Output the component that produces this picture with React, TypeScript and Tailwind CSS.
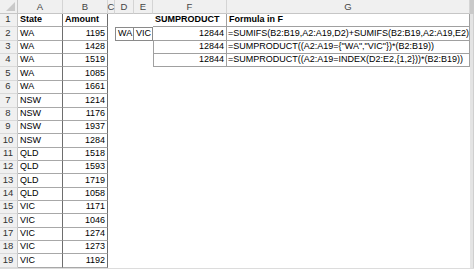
import React from "react";

const data: [string, string][] = [
  ["WA", "1195"], ["WA", "1428"], ["WA", "1519"], ["WA", "1085"], ["WA", "1661"],
  ["NSW", "1214"], ["NSW", "1176"], ["NSW", "1937"], ["NSW", "1284"],
  ["QLD", "1518"], ["QLD", "1593"], ["QLD", "1719"], ["QLD", "1058"],
  ["VIC", "1171"], ["VIC", "1046"], ["VIC", "1274"], ["VIC", "1273"], ["VIC", "1192"],
];

const formulas: Record<number, string> = {
  2: "=SUMIFS(B2:B19,A2:A19,D2)+SUMIFS(B2:B19,A2:A19,E2)",
  3: '=SUMPRODUCT((A2:A19={"WA","VIC"})*(B2:B19))',
  4: "=SUMPRODUCT((A2:A19=INDEX(D2:E2,{1,2}))*(B2:B19))",
};

function Cell({ className = "", children }: { className?: string; children?: React.ReactNode }) {
  return (
    <div className={"box-border flex items-end overflow-visible whitespace-nowrap leading-[12px] pb-[1px] " + className}>
      {children}
    </div>
  );
}

export default function App() {
  const cols = ["A", "B", "C", "D", "E", "F", "G"];
  const rows: React.ReactNode[] = [];
  for (let r = 1; r <= 19; r++) {
    const isFirst = r === 1;
    const d = r >= 2 ? data[r - 2] : null;
    rows.push(
      <React.Fragment key={r}>
        <Cell className="justify-center bg-[#f0f0f0] border-r border-b border-r-[#c6c6c6] border-b-[#d9d9d9] text-[#333] text-[9.5px] pr-[1px]">{r}</Cell>
        <Cell className={"border-r border-b border-r-[#6e6e6e] border-b-[#a8a8a8] pl-[2px] " + (isFirst ? "font-bold" : "")}>
          {isFirst ? "State" : d![0]}
        </Cell>
        <Cell className={"border-r border-b border-r-[#6e6e6e] border-b-[#a8a8a8] " + (isFirst ? "font-bold pl-[2px]" : "justify-end pr-[2px]")}>
          {isFirst ? "Amount" : d![1]}
        </Cell>
        <Cell />
        {r === 2 ? (
          <>
            <Cell className="border border-[#8a8a8a] pl-[2px]">WA</Cell>
            <Cell className="border-t border-r border-b border-[#8a8a8a] pl-[2px]">VIC</Cell>
          </>
        ) : (
          <>
            <Cell />
            <Cell />
          </>
        )}
        {isFirst ? (
          <>
            <Cell className="border-r border-b border-[#a0a0a0] font-bold pl-[2px]">SUMPRODUCT</Cell>
            <Cell className="border-r border-b border-[#a0a0a0] font-bold pl-[2px]">Formula in F</Cell>
          </>
        ) : r <= 4 ? (
          <>
            <Cell className={"border-r border-b border-[#a0a0a0] justify-end pr-[2px] " + (r > 2 ? "border-l" : "")}>12844</Cell>
            <Cell className="border-r border-b border-[#a0a0a0] pl-[1px]">{formulas[r]}</Cell>
          </>
        ) : (
          <>
            <Cell />
            <Cell />
          </>
        )}
        <div className="bg-[#e4e4e4] border-r border-[#cfcfcf]" />
      </React.Fragment>
    );
  }

  return (
    <div
      className="w-[474px] h-[269px] overflow-hidden bg-[#dcdcdc] text-[9px] text-[#000]"
      style={{ fontFamily: '"Liberation Sans", Arial, sans-serif' }}
    >
      <div className="grid bg-white grid-cols-[18px_45px_45px_7px_19px_19px_74px_243px_4px] grid-rows-[14px_repeat(19,13.37px)]">
        <div className="relative bg-[#f0f0f0] border-r border-b border-[#c6c6c6]">
          <svg className="absolute right-[2px] bottom-[2px]" width="9" height="9" viewBox="0 0 9 9">
            <polygon points="9,0 9,9 0,9" fill="#c9c9c9" />
          </svg>
        </div>
        {cols.map((c) => (
          <div
            key={c}
            className="box-border flex items-center justify-center bg-[#f0f0f0] border-r border-b border-r-[#d4d4d4] border-b-[#c6c6c6] text-[#444] text-[9.5px] pt-[1px]"
          >
            {c}
          </div>
        ))}
        <div className="bg-[#c9c9c9]" />
        {rows}
      </div>
    </div>
  );
}
